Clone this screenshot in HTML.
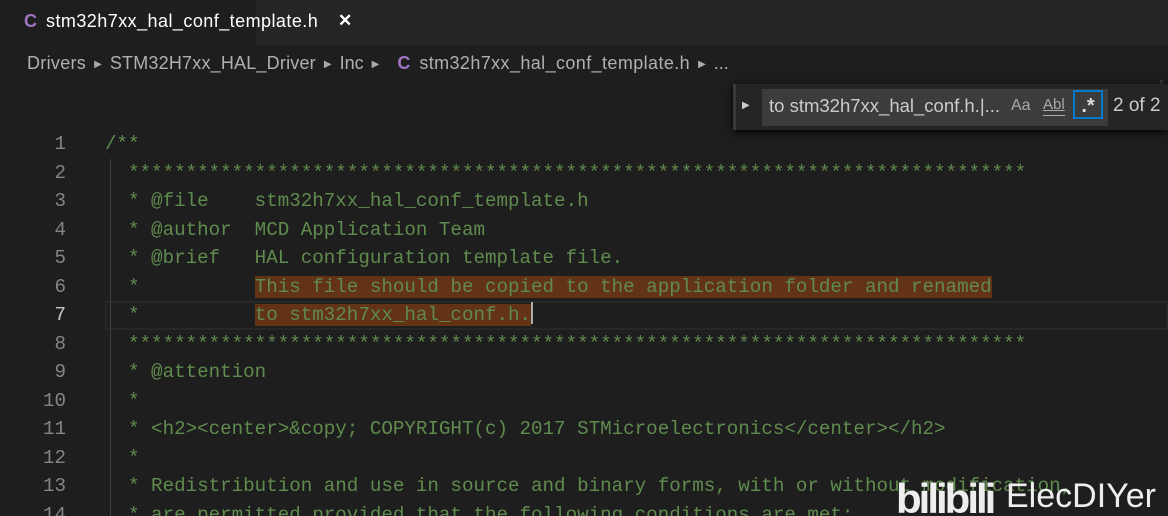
<!DOCTYPE html>
<html><head><meta charset="utf-8"><style>
*{margin:0;padding:0;box-sizing:border-box}
html,body{width:1168px;height:516px;overflow:hidden}
body{background:#1e1e1e;font-family:"Liberation Sans",sans-serif;position:relative}
.tabs{position:absolute;left:0;top:0;width:1168px;height:45px;background:#252526}
.tab{position:absolute;left:0;top:0;width:256px;height:45px;background:#1e1e1e;color:#fff;font-size:18px;line-height:42px;padding-left:24px;white-space:nowrap}
.c{color:#a074c4;font-weight:bold;margin-right:9px}
.bc{position:absolute;left:27px;top:50px;color:#b0b0b0;font-size:18px;line-height:26px;white-space:pre}
.ar{font-size:10px;color:#aaa;margin:0 8px 0 8px;vertical-align:2px}
.code{position:absolute;left:0;top:130px;font-family:"Liberation Mono",monospace;font-size:19.2px}
.ln{position:absolute;left:0;width:66px;text-align:right;color:#858585;height:28.5px;line-height:28.5px}
.tx{position:absolute;left:105px;color:#608b4e;white-space:pre;height:28.5px;line-height:28.5px}
.hl{background:#623315}
.find{position:absolute;left:733px;top:84px;width:435px;height:46px;background:#252526;box-shadow:0 2px 8px #000}
</style></head><body>
<div class="tabs"><div class="tab" style="width:370px;background:linear-gradient(90deg,#1e1e1e 0,#1e1e1e 256px,transparent 256px)"><span class="c">C</span><span style="letter-spacing:0.45px">stm32h7xx_hal_conf_template.h</span><span style="position:absolute;left:338px;top:0;font-weight:bold;font-size:17px">✕</span></div></div>
<div class="bc"><span style="letter-spacing:0.3px">Drivers</span><span class="ar">▶</span><span style="letter-spacing:0.2px">STM32H7xx_HAL_Driver</span><span class="ar">▶</span>Inc<span class="ar">▶</span>  <span class="c">C</span><span style="letter-spacing:0.4px">stm32h7xx_hal_conf_template.h</span><span class="ar">▶</span>...</div>
<div style="position:absolute;left:1160px;top:80px;width:3px;height:50px;background:#3a3a3a"></div>
<div class="code">
<div style="position:absolute;left:105px;top:171px;width:1063px;height:28.5px;border:2px solid #282828"></div>
<div style="position:absolute;left:110px;top:28.5px;width:1px;height:360px;background:#404040"></div>
<div class="ln" style="top:0">1</div><div class="tx" style="top:0">/**</div>
<div class="ln" style="top:28.5px">2</div><div class="tx" style="top:28.5px">  ******************************************************************************</div>
<div class="ln" style="top:57px">3</div><div class="tx" style="top:57px">  * @file    stm32h7xx_hal_conf_template.h</div>
<div class="ln" style="top:85.5px">4</div><div class="tx" style="top:85.5px">  * @author  MCD Application Team</div>
<div class="ln" style="top:114px">5</div><div class="tx" style="top:114px">  * @brief   HAL configuration template file.</div>
<div class="ln" style="top:142.5px">6</div><div class="tx" style="top:142.5px">  *          <span class="hl">This file should be copied to the application folder and renamed</span></div>
<div class="ln" style="top:171px;color:#c6c6c6">7</div><div class="tx" style="top:171px">  *          <span class="hl">to stm32h7xx_hal_conf.h.</span><span style="display:inline-block;width:2px;height:22px;background:#aeafad;vertical-align:-4px"></span></div>
<div class="ln" style="top:199.5px">8</div><div class="tx" style="top:199.5px">  ******************************************************************************</div>
<div class="ln" style="top:228px">9</div><div class="tx" style="top:228px">  * @attention</div>
<div class="ln" style="top:256.5px">10</div><div class="tx" style="top:256.5px">  *</div>
<div class="ln" style="top:285px">11</div><div class="tx" style="top:285px">  * &lt;h2&gt;&lt;center&gt;&amp;copy; COPYRIGHT(c) 2017 STMicroelectronics&lt;/center&gt;&lt;/h2&gt;</div>
<div class="ln" style="top:313.5px">12</div><div class="tx" style="top:313.5px">  *</div>
<div class="ln" style="top:342px">13</div><div class="tx" style="top:342px">  * Redistribution and use in source and binary forms, with or without modification,</div>
<div class="ln" style="top:370.5px">14</div><div class="tx" style="top:370.5px">  * are permitted provided that the following conditions are met:</div>
</div>
<div class="find">
<div style="position:absolute;left:0;top:0;width:3px;height:46px;background:#3a3a3a"></div>
<div style="position:absolute;left:9px;top:16px;color:#ccc;font-size:10px">▶</div>
<div style="position:absolute;left:29px;top:5px;width:346px;height:37px;background:#3c3c3c"></div>
<div style="position:absolute;left:36px;top:9px;color:#ccc;font-size:18.5px;line-height:26px;white-space:nowrap">to stm32h7xx_hal_conf.h.|...</div>
<div style="position:absolute;left:278px;top:9px;color:#aaa;font-size:16px;line-height:26px">Aa</div>
<div style="position:absolute;left:310px;top:11px;color:#aaa;font-size:15px;line-height:20px;text-decoration:underline;border-bottom:1px solid #aaa">Abl</div>
<div style="position:absolute;left:340px;top:6px;width:30px;height:29px;border:2px solid #007acc;color:#ddd;font-size:20px;font-weight:bold;text-align:center;line-height:28px">.*</div>
<div style="position:absolute;left:380px;top:9px;color:#ccc;font-size:19px;line-height:26px;white-space:nowrap">2 of 2</div>
</div>
<div style="position:absolute;left:896px;top:482px;color:#eee;font-size:42px;font-weight:bold;line-height:34px;letter-spacing:-3px">bilibili</div>
<div style="position:absolute;left:1006px;top:476px;color:#eee;font-size:34px;line-height:40px;white-space:nowrap">ElecDIYer</div>
</body></html>
